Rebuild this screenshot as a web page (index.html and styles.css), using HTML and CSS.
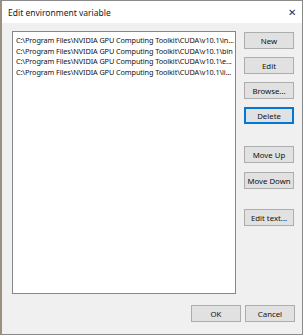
FILE: index.html
```html
<!DOCTYPE html>
<html lang="en">

<head>
   <meta charset="UTF-8">
   <meta name="viewport" content="width=device-width, initial-scale=1.0">
   <link rel="stylesheet" href="styles.css">
   <title>Edit environment variable</title>
</head>

<body>
   <div class="dialog">

      <div class="title-bar">
         <span class="title">Edit environment variable</span>
         <span class="close">&#x2715;</span>
      </div>

      <div class="content">
         <div class="list-box">
            <div class="row">C:\Program Files\NVIDIA GPU Computing Toolkit\CUDA\v10.1\in...</div>
            <div class="row">C:\Program Files\NVIDIA GPU Computing Toolkit\CUDA\v10.1\bin</div>
            <div class="row">C:\Program Files\NVIDIA GPU Computing Toolkit\CUDA\v10.1\e...</div>
            <div class="row">C:\Program Files\NVIDIA GPU Computing Toolkit\CUDA\v10.1\li...</div>
         </div>

         <div class="side-buttons">
            <button class="btn">New</button>
            <button class="btn gap-8">Edit</button>
            <button class="btn gap-8">Browse...</button>
            <button class="btn gap-8 focused">Delete</button>
            <button class="btn gap-22">Move Up</button>
            <button class="btn gap-9">Move Down</button>
            <button class="btn gap-20">Edit text...</button>
         </div>
      </div>

      <div class="footer">
         <button class="btn">OK</button>
         <button class="btn">Cancel</button>
      </div>

   </div>
</body>

</html>
```

FILE: styles.css
```css
* {
   padding: 0;
   margin: 0;
   box-sizing: border-box;
}

body {
   font-family: "Noto Sans", "Open Sans", sans-serif;
   background-color: #f0f0f0;
   color: #000;
}

.dialog {
   width: 303px;
   height: 335px;
   background-color: #f0f0f0;
   border: 1px solid #8a8a8a;
   border-left: 2px solid #9a9080;
   display: flex;
   flex-direction: column;
}

.title-bar {
   height: 22px;
   background-color: #fff;
   display: flex;
   align-items: center;
   justify-content: space-between;
   padding: 0 6px 0 6px;
}

.title {
   font-size: 8.5px;
   color: #1a1a1a;
}

.close {
   font-size: 10px;
   color: #333;
}

.content {
   display: flex;
   padding: 8px 0 0 10px;
}

.list-box {
   width: 224px;
   height: 263px;
   background-color: #fff;
   border: 1px solid #828790;
   padding: 3px 0 0 3px;
}

.row {
   font-size: 7.3px;
   letter-spacing: -0.1px;
   line-height: 10.6px;
   white-space: nowrap;
   overflow: hidden;
   color: #111;
}

.side-buttons {
   display: flex;
   flex-direction: column;
   margin-left: 8px;
   padding-top: 1px;
}

.btn {
   width: 50px;
   height: 17px;
   font-family: "Noto Sans", "Open Sans", sans-serif;
   font-size: 7.8px;
   color: #111;
   background-color: #e1e1e1;
   border: 1px solid #adadad;
   cursor: pointer;
}

.btn.focused {
   border: 2px solid #0078d7;
}

.gap-8 {
   margin-top: 8px;
}

.gap-9 {
   margin-top: 9px;
}

.gap-20 {
   margin-top: 20px;
}

.gap-22 {
   margin-top: 22px;
}

.footer {
   display: flex;
   justify-content: flex-end;
   gap: 4px;
   padding: 11px 7px 0 0;
}
```
